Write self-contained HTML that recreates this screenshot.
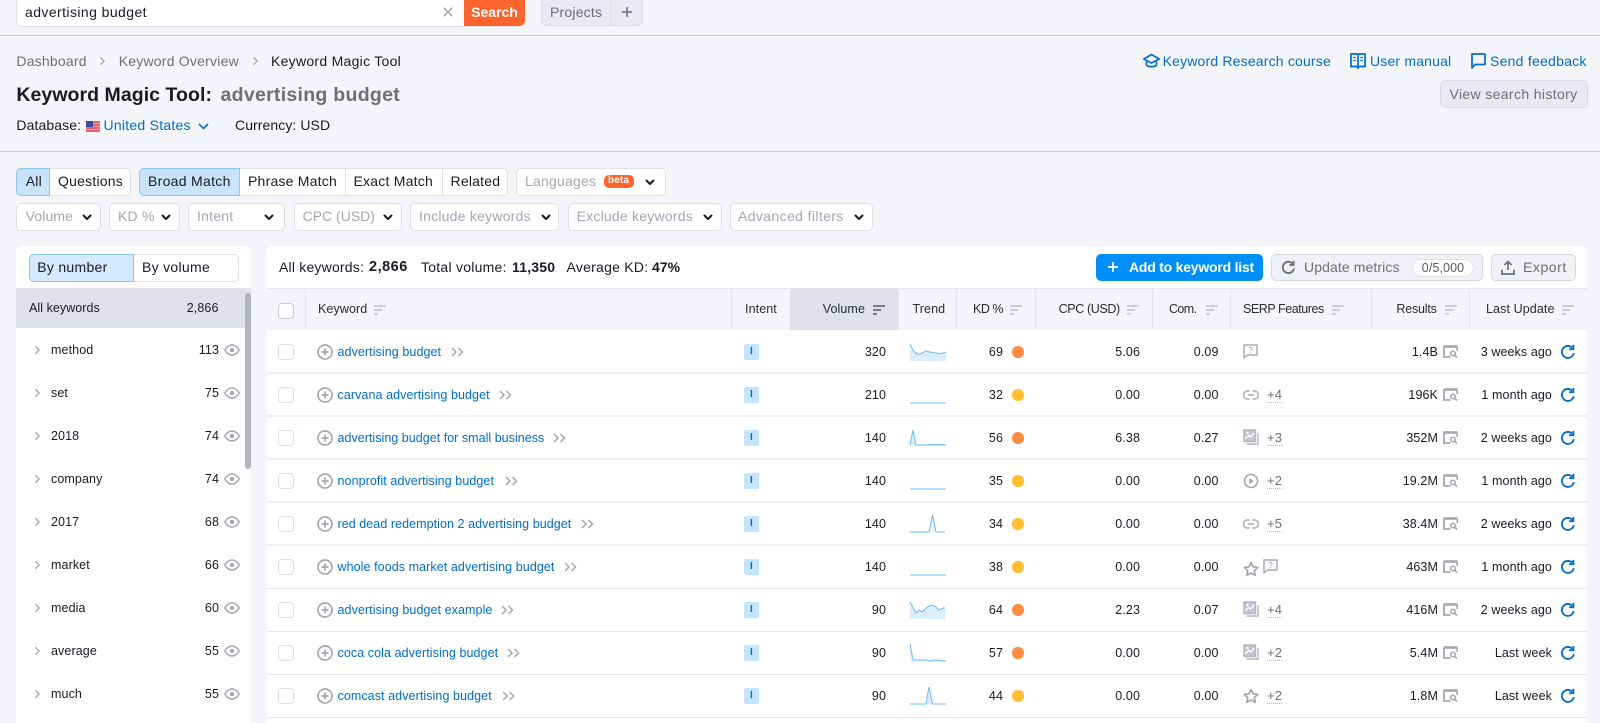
<!DOCTYPE html>
<html lang="en"><head><meta charset="utf-8"><title>Keyword Magic Tool</title>
<style>
html,body{margin:0;padding:0;width:1600px;height:723px;overflow:hidden;background:#f4f5f9}
body{position:relative;font-family:"Liberation Sans",sans-serif;color:#191b23;font-size:12.5px;letter-spacing:.1px}
.a,.a>*,.r>*{position:absolute}
.a{white-space:nowrap}
.b{position:absolute;box-sizing:border-box;background:#fff;border:1px solid #dfe0e6;border-radius:5px}
.t{position:absolute;white-space:nowrap}
.f{font-size:14px;letter-spacing:.22px;line-height:26px;top:0}
svg{position:absolute;overflow:visible}
.blue{color:#006dca}
.g{color:#a4a6b3}
.r{position:absolute;left:0;width:1600px;height:43px;line-height:45px;white-space:nowrap}
.r .c{left:278px;top:14px;width:16px;height:16px;box-sizing:border-box;border:1px solid #dcdee4;border-radius:4px;background:#fff}
.r .k{left:337.5px;color:#006dca;letter-spacing:.08px}
.r .i{left:744px;top:14px;width:15px;height:16px;background:#c4e5fe;border-radius:2px;color:#006dca;font-size:10px;font-weight:bold;text-align:center;line-height:16px}
.r .v{right:714px}.r .d{right:597px}.r .p{right:460px}.r .m{right:381.5px}.r .s{right:162px}.r .u{right:48px}
.r .o{left:1012px;top:16px;width:11.5px;height:11.5px;border-radius:50%}
.or{background:#ff8c43}.ye{background:#ffbf31}
.r .n{left:1267px;color:#6c6e79;font-size:13px;line-height:15px;top:14px;border-bottom:1px dotted #b3b5c0;height:15px}
.l{position:absolute;left:16px;width:235px;height:43px;line-height:43px}
.l span{position:absolute}
.l .x{left:35px;color:#191b23}
.l .y{right:32px}
.h{position:absolute;top:289px;height:41px;line-height:41px;white-space:nowrap;color:#292c36}
.sep{position:absolute;top:289px;width:1px;height:41px;background:#e4e5ea}
</style></head>
<body>
<svg width="0" height="0" style="position:absolute">
<defs>
<symbol id="ch" viewBox="0 0 12 12"><path d="M2.500 4.500L6 8l3.500-3.500" fill="none" stroke="#191b23" stroke-width="2" stroke-linecap="round" stroke-linejoin="round"/></symbol>
<symbol id="sort" viewBox="0 0 12 10"><path d="M0 1h12M0 5h8M0 9h4" fill="none" stroke="#c4c7cf" stroke-width="1.700"/></symbol>
<symbol id="plus" viewBox="0 0 16 16"><circle cx="8" cy="8" r="7" fill="none" stroke="#a4a6b3" stroke-width="1.700"/><path d="M8 4.500v7M4.500 8h7" stroke="#a4a6b3" stroke-width="1.700"/></symbol>
<symbol id="dbl" viewBox="0 0 13 10"><path d="M1 1l4 4-4 4M7.500 1l4 4-4 4" fill="none" stroke="#a4a6b3" stroke-width="1.500"/></symbol>
<symbol id="eye" viewBox="0 0 16 12"><path d="M.8 6c2-3.300 4.700-5 7.200-5s5.200 1.700 7.200 5c-2 3.300-4.700 5-7.200 5S2.800 9.300.8 6z" fill="none" stroke="#a4a6b3" stroke-width="1.500"/><circle cx="8" cy="6" r="2.200" fill="#a4a6b3"/></symbol>
<symbol id="gt" viewBox="0 0 8 12"><path d="M1.500 1.500L6 6l-4.500 4.500" fill="none" stroke="#a4a6b3" stroke-width="1.500"/></symbol>
<symbol id="ref" viewBox="0 0 16 16"><path d="M13.800 9.200A6 6 0 1 1 12.200 3.700" fill="none" stroke="#006dca" stroke-width="1.800"/><path d="M13.400.9v4.300H9.100" fill="none" stroke="#006dca" stroke-width="1.800"/></symbol>
<symbol id="res" viewBox="0 0 15 13"><path d="M.5 1.500h14" stroke="#a4a6b3" stroke-width="2.600"/><path d="M1 2v10h6.500M14.300 2v4" fill="none" stroke="#a4a6b3" stroke-width="1.800"/><circle cx="10" cy="8.500" r="2.300" fill="none" stroke="#a4a6b3" stroke-width="1.500"/><path d="M11.700 10.300l2.300 2.200" stroke="#a4a6b3" stroke-width="1.700"/></symbol>
<symbol id="link" viewBox="0 0 16 12"><path d="M6.500 2H4.500a4 4 0 0 0 0 8h2M9.500 2h2a4 4 0 0 1 0 8h-2M5 6h6" fill="none" stroke="#b3b5c0" stroke-width="1.700"/></symbol>
<symbol id="img" viewBox="0 0 16 16"><path d="M1 1h11.500v11.500H1z" fill="#c4c7cf" stroke="#b3b5c0" stroke-width="1.400"/><path d="M2 10l3.500-3.500 2 1.500 4-4" fill="none" stroke="#fff" stroke-width="1.300"/><circle cx="4.500" cy="4" r="1.200" fill="#fff"/><path d="M15 4v11H3.500" fill="none" stroke="#b3b5c0" stroke-width="1.400"/></symbol>
<symbol id="play" viewBox="0 0 16 16"><circle cx="8" cy="8" r="6.500" fill="none" stroke="#a4a6b3" stroke-width="1.600"/><path d="M6.300 5v6l4.700-3z" fill="#a4a6b3"/></symbol>
<symbol id="star" viewBox="0 0 16 16"><path d="M8 1.500l2 4.300 4.700.6-3.400 3.200.9 4.700L8 12l-4.200 2.300.9-4.700L1.300 6.400 6 5.800z" fill="none" stroke="#a4a6b3" stroke-width="1.700" stroke-linejoin="round"/></symbol>
<symbol id="q" viewBox="0 0 15 15"><path d="M1 1h13v10H4.500L1 14z" fill="none" stroke="#b3b5c0" stroke-width="1.700" stroke-linejoin="round"/><path d="M6 4.200c.4-1 3.200-1 3.200.6 0 1-1.300 1-1.500 2M7.700 8v1" fill="none" stroke="#a4a6b3" stroke-width=".9"/></symbol>
</defs></svg>

<!-- top bar -->
<div style="position:absolute;left:0;top:35px;width:1600px;height:1px;background:#c9cbd3"></div>
<div class="b" style="left:16px;top:-6px;width:509px;height:33px;border-color:#e0e1e7;border-radius:6px"></div>
<div class="t" style="left:25px;top:3px;font-size:14px;letter-spacing:.42px;line-height:18px">advertising budget</div>
<svg style="left:443px;top:7px" width="10" height="10" viewBox="0 0 10 10"><path d="M.8.800l8.400 8.400M9.200.800L.8 9.200" stroke="#a4a6b3" stroke-width="1.500"/></svg>
<div class="t" style="left:464px;top:-6px;width:61px;height:32px;background:#ff642d;border-radius:0 6px 6px 0;color:#fff;font-weight:bold;font-size:14px;line-height:36px;text-align:center;letter-spacing:0">Search</div>
<div class="t" style="left:541px;top:-6px;width:102px;height:32px;box-sizing:border-box;background:#e9eaf0;border:1px solid #dcdee4;border-radius:6px"></div>
<div style="position:absolute;left:611px;top:0;width:1px;height:26px;background:#dcdee4"></div>
<div class="t" style="left:550px;top:3px;font-size:14px;color:#6c6e79;line-height:18px;letter-spacing:.2px">Projects</div>
<svg style="left:622px;top:7px" width="10" height="10" viewBox="0 0 10 10"><path d="M5 0v10M0 5h10" stroke="#6c6e79" stroke-width="1.500"/></svg>

<!-- breadcrumb -->
<div class="t" style="left:16.400px;top:52px;font-size:14px;line-height:18px;color:#6c6e79;letter-spacing:.2px">Dashboard</div>
<svg style="left:99px;top:56px" width="7" height="10"><use href="#gt" width="7" height="10"/></svg>
<div class="t" style="left:118.700px;top:52px;font-size:14px;line-height:18px;color:#6c6e79;letter-spacing:.22px">Keyword Overview</div>
<svg style="left:252px;top:56px" width="7" height="10"><use href="#gt" width="7" height="10"/></svg>
<div class="t" style="left:271px;top:52px;font-size:14px;line-height:18px;letter-spacing:.28px">Keyword Magic Tool</div>
<div class="t" style="left:16.400px;top:83px;font-size:19.500px;line-height:24px;font-weight:bold;letter-spacing:.05px">Keyword Magic Tool:</div>
<div class="t" style="left:220.500px;top:83px;font-size:19.500px;line-height:24px;font-weight:bold;color:#6c6e79;letter-spacing:.28px">advertising budget</div>
<div class="t" style="left:16.400px;top:116px;font-size:14px;line-height:18px;letter-spacing:.1px">Database:</div>
<svg style="left:85.500px;top:121px" width="14" height="11" viewBox="0 0 14 11"><rect width="14" height="11" fill="#f2a3a8"/><path d="M0 1h14M0 4h14M0 7h14M0 10h14" stroke="#e0394a" stroke-width="1.200"/><rect width="7" height="6" fill="#3c4a9a"/></svg>
<div class="t blue" style="left:103.500px;top:116px;font-size:14px;line-height:18px;letter-spacing:.25px">United States</div>
<svg style="left:197.500px;top:122px" width="11" height="9" viewBox="0 0 11 9"><path d="M1 2l4.500 4.500L10 2" fill="none" stroke="#006dca" stroke-width="1.600"/></svg>
<div class="t" style="left:235px;top:116px;font-size:14px;line-height:18px;letter-spacing:.08px">Currency: USD</div>

<!-- top right links -->
<svg style="left:1143px;top:53px" width="17" height="16" viewBox="0 0 17 16"><path d="M.8 6L8.500 1.500 16.200 6 8.500 10z" fill="none" stroke="#006dca" stroke-width="1.700" stroke-linejoin="round"/><path d="M3.500 8.500v3.500c1.500 2.300 8.500 2.300 10 0V8.500" fill="none" stroke="#006dca" stroke-width="1.700"/></svg>
<div class="t blue" style="left:1162.600px;top:52px;font-size:14px;line-height:18px;letter-spacing:.18px">Keyword Research course</div>
<svg style="left:1350px;top:53px" width="16" height="16" viewBox="0 0 16 16"><path d="M1 1h14v12.500H9L8 15l-1-1.500H1zM8 1v12" fill="none" stroke="#006dca" stroke-width="1.700"/><path d="M3.200 4.500h2.500M3.200 7.500h2.500M10.300 4.500h2.500M10.300 7.500h2.500" stroke="#006dca" stroke-width="1.300"/></svg>
<div class="t blue" style="left:1370px;top:52px;font-size:14px;line-height:18px;letter-spacing:.18px">User manual</div>
<svg style="left:1471px;top:53px" width="15" height="16" viewBox="0 0 15 16"><path d="M1 1h13v10.500H4L1 15z" fill="none" stroke="#006dca" stroke-width="1.700" stroke-linejoin="round"/></svg>
<div class="t blue" style="left:1490px;top:52px;font-size:14px;line-height:18px;letter-spacing:.25px">Send feedback</div>
<div class="b" style="left:1440px;top:80px;width:147.500px;height:28px;background:#e9eaf0;border-color:#d9dbe2;color:#6c6e79;font-size:14px;line-height:26px;padding-left:8.500px;letter-spacing:.36px;white-space:nowrap">View search history</div>
<div style="position:absolute;left:0;top:151px;width:1600px;height:1px;background:#c9cbd3"></div>

<!-- filter row 1 -->
<div class="b" style="left:16.400px;top:168px;width:115px;height:28px"></div>
<div class="b" style="left:16.400px;top:168px;width:34px;height:28px;background:#c9e3fb;border-color:#8ec5f5;border-radius:5px 0 0 5px"></div>
<div class="t f" style="left:25.700px;top:168px;font-size:14px">All</div>
<div class="t f" style="left:58px;top:168px">Questions</div>
<div class="b" style="left:139px;top:168px;width:369px;height:28px"></div>
<div class="b" style="left:139px;top:168px;width:100.500px;height:28px;background:#c9e3fb;border-color:#8ec5f5;border-radius:5px 0 0 5px"></div>
<div style="position:absolute;left:345px;top:168px;width:1px;height:28px;background:#dfe0e6"></div>
<div style="position:absolute;left:441.500px;top:168px;width:1px;height:28px;background:#dfe0e6"></div>
<div class="t f" style="left:148px;top:168px;letter-spacing:.3px">Broad Match</div>
<div class="t f" style="left:248px;top:168px">Phrase Match</div>
<div class="t f" style="left:353.500px;top:168px">Exact Match</div>
<div class="t f" style="left:450.500px;top:168px">Related</div>
<div class="b" style="left:516px;top:168px;width:150px;height:28px"></div>
<div class="t f g" style="left:525px;top:168px">Languages</div>
<div class="t" style="left:603.500px;top:175px;width:30px;height:12.500px;background:#ff642d;border-radius:5px;color:#fff;font-size:10px;font-weight:bold;line-height:12px;text-align:center">beta</div>
<svg style="left:644px;top:176px" width="12" height="12"><use href="#ch" width="12" height="12"/></svg>

<!-- filter row 2 -->
<div class="b" style="left:16.400px;top:203px;width:85px;height:28px"></div>
<div class="t f g" style="left:25.700px;top:203px;letter-spacing:.1px">Volume</div>
<svg style="left:81px;top:211px" width="12" height="12"><use href="#ch" width="12" height="12"/></svg>
<div class="b" style="left:109px;top:203px;width:71px;height:28px"></div>
<div class="t f g" style="left:118px;top:203px">KD %</div>
<svg style="left:160px;top:211px" width="12" height="12"><use href="#ch" width="12" height="12"/></svg>
<div class="b" style="left:188px;top:203px;width:97px;height:28px"></div>
<div class="t f g" style="left:197px;top:203px">Intent</div>
<svg style="left:263px;top:211px" width="12" height="12"><use href="#ch" width="12" height="12"/></svg>
<div class="b" style="left:294px;top:203px;width:108px;height:28px"></div>
<div class="t f g" style="left:302.600px;top:203px;letter-spacing:0">CPC (USD)</div>
<svg style="left:382px;top:211px" width="12" height="12"><use href="#ch" width="12" height="12"/></svg>
<div class="b" style="left:410px;top:203px;width:149px;height:28px"></div>
<div class="t f g" style="left:419px;top:203px">Include keywords</div>
<svg style="left:539.500px;top:211px" width="12" height="12"><use href="#ch" width="12" height="12"/></svg>
<div class="b" style="left:568px;top:203px;width:153.500px;height:28px"></div>
<div class="t f g" style="left:576.600px;top:203px">Exclude keywords</div>
<svg style="left:702px;top:211px" width="12" height="12"><use href="#ch" width="12" height="12"/></svg>
<div class="b" style="left:730px;top:203px;width:142.500px;height:28px"></div>
<div class="t f g" style="left:738px;top:203px;letter-spacing:.38px">Advanced filters</div>
<svg style="left:853px;top:211px" width="12" height="12"><use href="#ch" width="12" height="12"/></svg>

<!-- left panel -->
<div style="position:absolute;left:16px;top:246px;width:235px;height:490px;background:#fff;border-radius:6px 6px 0 0"></div>
<div class="b" style="left:28.600px;top:254px;width:210px;height:28px"></div>
<div class="b" style="left:28.600px;top:254px;width:105.500px;height:28px;background:#d5eafd;border-color:#8ec5f5;border-radius:5px 0 0 5px"></div>
<div class="t f" style="left:37.200px;top:254px;letter-spacing:.3px">By number</div>
<div class="t f" style="left:142px;top:254px;letter-spacing:.3px">By volume</div>
<div style="position:absolute;left:16px;top:288px;width:235px;height:40px;background:#e0e1e9"></div>
<div class="t" style="left:29px;top:288px;line-height:40px;font-size:12.500px;letter-spacing:.05px">All keywords</div>
<div class="t" style="right:1381.500px;top:288px;line-height:40px">2,866</div>
<div style="position:absolute;left:245px;top:293px;width:5.500px;height:176px;background:#b3b5bd;border-radius:3px"></div>

<div class="l" style="top:328.500px"><span class="x" style="left:35px">method</span><span class="y">113</span></div>
<div class="l" style="top:371.500px"><span class="x">set</span><span class="y">75</span></div>
<div class="l" style="top:414.500px"><span class="x">2018</span><span class="y">74</span></div>
<div class="l" style="top:457.500px"><span class="x">company</span><span class="y">74</span></div>
<div class="l" style="top:500.500px"><span class="x">2017</span><span class="y">68</span></div>
<div class="l" style="top:543.500px"><span class="x">market</span><span class="y">66</span></div>
<div class="l" style="top:586.500px"><span class="x">media</span><span class="y">60</span></div>
<div class="l" style="top:629.500px"><span class="x">average</span><span class="y">55</span></div>
<div class="l" style="top:672.500px"><span class="x">much</span><span class="y">55</span></div>

<svg style="left:34px;top:345px" width="7" height="10"><use href="#gt" width="7" height="10"/></svg><svg style="left:223.500px;top:344px" width="16" height="12"><use href="#eye" width="16" height="12"/></svg>
<svg style="left:34px;top:388px" width="7" height="10"><use href="#gt" width="7" height="10"/></svg><svg style="left:223.500px;top:387px" width="16" height="12"><use href="#eye" width="16" height="12"/></svg>
<svg style="left:34px;top:431px" width="7" height="10"><use href="#gt" width="7" height="10"/></svg><svg style="left:223.500px;top:430px" width="16" height="12"><use href="#eye" width="16" height="12"/></svg>
<svg style="left:34px;top:474px" width="7" height="10"><use href="#gt" width="7" height="10"/></svg><svg style="left:223.500px;top:473px" width="16" height="12"><use href="#eye" width="16" height="12"/></svg>
<svg style="left:34px;top:517px" width="7" height="10"><use href="#gt" width="7" height="10"/></svg><svg style="left:223.500px;top:516px" width="16" height="12"><use href="#eye" width="16" height="12"/></svg>
<svg style="left:34px;top:560px" width="7" height="10"><use href="#gt" width="7" height="10"/></svg><svg style="left:223.500px;top:559px" width="16" height="12"><use href="#eye" width="16" height="12"/></svg>
<svg style="left:34px;top:603px" width="7" height="10"><use href="#gt" width="7" height="10"/></svg><svg style="left:223.500px;top:602px" width="16" height="12"><use href="#eye" width="16" height="12"/></svg>
<svg style="left:34px;top:646px" width="7" height="10"><use href="#gt" width="7" height="10"/></svg><svg style="left:223.500px;top:645px" width="16" height="12"><use href="#eye" width="16" height="12"/></svg>
<svg style="left:34px;top:689px" width="7" height="10"><use href="#gt" width="7" height="10"/></svg><svg style="left:223.500px;top:688px" width="16" height="12"><use href="#eye" width="16" height="12"/></svg>

<!-- right panel -->
<div style="position:absolute;left:267px;top:246px;width:1320px;height:490px;background:#fff;border-radius:6px 6px 0 0"></div>
<div class="t" style="left:279px;top:258px;font-size:14px;line-height:18px;letter-spacing:.2px">All keywords:</div>
<div class="t" style="left:369px;top:258px;font-size:14.500px;line-height:18px;font-weight:bold;letter-spacing:.5px">2,866</div>
<div class="t" style="left:421px;top:258px;font-size:14px;line-height:18px;letter-spacing:.25px">Total volume:</div>
<div class="t" style="left:512px;top:258px;font-size:14px;line-height:18px;font-weight:bold;letter-spacing:.2px">11,350</div>
<div class="t" style="left:566.500px;top:258px;font-size:14px;line-height:18px;letter-spacing:.25px">Average KD:</div>
<div class="t" style="left:652px;top:258px;font-size:14px;line-height:18px;font-weight:bold;letter-spacing:0">47%</div>
<div class="t" style="left:1096px;top:254px;width:167px;height:27px;background:#008ff8;border-radius:5px"></div>
<svg style="left:1108px;top:262px" width="10" height="10" viewBox="0 0 10 10"><path d="M5 0v10M0 5h10" stroke="#fff" stroke-width="1.700"/></svg>
<div class="t" style="left:1129px;top:258px;color:#fff;font-size:14px;line-height:18px;font-weight:bold;letter-spacing:-.22px">Add to keyword list</div>
<div class="b" style="left:1271px;top:254px;width:212px;height:27px;background:#f0f1f5;border-color:#d5d7de"></div>
<svg style="left:1281px;top:260px" width="15" height="15" viewBox="0 0 16 16"><path d="M13.800 9.200A6 6 0 1 1 12.200 3.700" fill="none" stroke="#6c6e79" stroke-width="2"/><path d="M13.400.9v4.300H9.100" fill="none" stroke="#6c6e79" stroke-width="2"/></svg>
<div class="t" style="left:1304px;top:258px;color:#6c6e79;font-size:14px;line-height:18px;letter-spacing:.1px">Update metrics</div>
<div class="b" style="left:1412px;top:259px;width:62px;height:18px;border-radius:9px;text-align:center;line-height:16px;color:#5a5c67;font-size:12.500px;border-color:#dfe0e6">0/5,000</div>
<div class="b" style="left:1491px;top:254px;width:84.500px;height:27px;background:#f0f1f5;border-color:#d5d7de"></div>
<svg style="left:1501px;top:260px" width="14" height="15" viewBox="0 0 14 15"><path d="M7 10V2M3.500 5L7 1.500 10.500 5" fill="none" stroke="#6c6e79" stroke-width="1.600"/><path d="M1 10v4h12v-4" fill="none" stroke="#6c6e79" stroke-width="1.800"/></svg>
<div class="t" style="left:1523px;top:258px;color:#6c6e79;font-size:14px;line-height:18px;letter-spacing:.55px">Export</div>

<!-- table header -->
<div style="position:absolute;left:267px;top:288px;width:1320px;height:42px;background:#f4f5f9;border-top:1px solid #e4e5ea;box-sizing:border-box"></div>
<div style="position:absolute;left:790px;top:289px;width:108px;height:41px;background:#e0e1e9"></div>
<div class="sep" style="left:305px"></div><div class="sep" style="left:731px"></div><div class="sep" style="left:898px"></div><div class="sep" style="left:956px"></div><div class="sep" style="left:1035px"></div><div class="sep" style="left:1152px"></div><div class="sep" style="left:1230px"></div><div class="sep" style="left:1371px"></div><div class="sep" style="left:1469px"></div>
<div style="position:absolute;left:278px;top:303px;width:16px;height:16px;box-sizing:border-box;border:1px solid #c9cbd3;border-radius:4px;background:#fff"></div>
<div class="h" style="left:318px">Keyword</div><svg style="left:374px;top:305px" width="12" height="10"><use href="#sort" width="12" height="10"/></svg>
<div class="h" style="left:745px">Intent</div>
<div class="h" style="right:735px">Volume</div><svg style="left:873px;top:305px" width="12" height="10" viewBox="0 0 12 10"><path d="M0 1h12M0 5h8M0 9h4" fill="none" stroke="#6c6e79" stroke-width="1.700"/></svg>
<div class="h" style="left:912.500px">Trend</div>
<div class="h" style="left:973px;letter-spacing:-.5px">KD %</div><svg style="left:1010px;top:305px" width="12" height="10"><use href="#sort" width="12" height="10"/></svg>
<div class="h" style="left:1058.600px;letter-spacing:-.38px">CPC (USD)</div><svg style="left:1127px;top:305px" width="12" height="10"><use href="#sort" width="12" height="10"/></svg>
<div class="h" style="left:1169px;letter-spacing:-.6px">Com.</div><svg style="left:1206px;top:305px" width="12" height="10"><use href="#sort" width="12" height="10"/></svg>
<div class="h" style="left:1243px;letter-spacing:-.45px">SERP Features</div><svg style="left:1332px;top:305px" width="12" height="10"><use href="#sort" width="12" height="10"/></svg>
<div class="h" style="left:1396.400px;letter-spacing:-.2px">Results</div><svg style="left:1445px;top:305px" width="12" height="10"><use href="#sort" width="12" height="10"/></svg>
<div class="h" style="left:1486px">Last Update</div><svg style="left:1562px;top:305px" width="12" height="10"><use href="#sort" width="12" height="10"/></svg>

<!-- row lines -->
<div style="position:absolute;left:267px;top:372px;width:1320px;height:2px;background:#eeeff4"></div>
<div style="position:absolute;left:267px;top:415px;width:1320px;height:2px;background:#eeeff4"></div>
<div style="position:absolute;left:267px;top:458px;width:1320px;height:2px;background:#eeeff4"></div>
<div style="position:absolute;left:267px;top:501px;width:1320px;height:2px;background:#eeeff4"></div>
<div style="position:absolute;left:267px;top:544px;width:1320px;height:2px;background:#eeeff4"></div>
<div style="position:absolute;left:267px;top:588px;width:1320px;height:1px;background:#e6e7ed"></div>
<div style="position:absolute;left:267px;top:631px;width:1320px;height:1px;background:#e6e7ed"></div>
<div style="position:absolute;left:267px;top:674px;width:1320px;height:1px;background:#e6e7ed"></div>
<div style="position:absolute;left:267px;top:717px;width:1320px;height:1px;background:#e6e7ed"></div>

<!-- rows -->
<div class="r" style="top:330px"><div class="c"></div><svg style="left:317px;top:14px" width="16" height="16"><use href="#plus" width="16" height="16"/></svg><span class="k">advertising budget</span><svg style="left:451px;top:17px" width="13" height="10"><use href="#dbl" width="13" height="10"/></svg><div class="i">I</div><span class="v">320</span>
<svg style="left:910px;top:13px" width="36" height="18" viewBox="0 0 36 18"><path d="M0 1l3 6 4 4h3l6-3 4 1 6 1 4 1 6-2v9H0z" fill="#dceefd"/><path d="M0 1l3 6 4 4h3l6-3 4 1 6 1 4 1 6-2" fill="none" stroke="#6bbcf7" stroke-width="1"/></svg>
<span class="d">69</span><div class="o or"></div><span class="p">5.06</span><span class="m">0.09</span>
<svg style="left:1243px;top:14px" width="15" height="15"><use href="#q" width="15" height="15"/></svg>
<span class="s">1.4B</span><svg style="left:1443px;top:15px" width="15" height="13"><use href="#res" width="15" height="13"/></svg><span class="u">3 weeks ago</span><svg style="left:1560px;top:14px" width="16" height="16"><use href="#ref" width="16" height="16"/></svg></div>

<div class="r" style="top:373px"><div class="c"></div><svg style="left:317px;top:14px" width="16" height="16"><use href="#plus" width="16" height="16"/></svg><span class="k">carvana advertising budget</span><svg style="left:498.500px;top:17px" width="13" height="10"><use href="#dbl" width="13" height="10"/></svg><div class="i">I</div><span class="v">210</span>
<svg style="left:910px;top:13px" width="36" height="18" viewBox="0 0 36 18"><path d="M0 17h36" fill="none" stroke="#6bbcf7" stroke-width="1"/></svg>
<span class="d">32</span><div class="o ye"></div><span class="p">0.00</span><span class="m">0.00</span>
<svg style="left:1243px;top:16px" width="16" height="12"><use href="#link" width="16" height="12"/></svg><span class="n">+4</span>
<span class="s">196K</span><svg style="left:1443px;top:15px" width="15" height="13"><use href="#res" width="15" height="13"/></svg><span class="u">1 month ago</span><svg style="left:1560px;top:14px" width="16" height="16"><use href="#ref" width="16" height="16"/></svg></div>

<div class="r" style="top:416px"><div class="c"></div><svg style="left:317px;top:14px" width="16" height="16"><use href="#plus" width="16" height="16"/></svg><span class="k" style="letter-spacing:.03px">advertising budget for small business</span><svg style="left:553px;top:17px" width="13" height="10"><use href="#dbl" width="13" height="10"/></svg><div class="i">I</div><span class="v">140</span>
<svg style="left:910px;top:13px" width="36" height="18" viewBox="0 0 36 18"><path d="M0 16l3-15 3 15 8 0 8-.5 8 0 6 .5v1H0z" fill="#dceefd"/><path d="M0 16l3-15 3 15h8l8-.5 8 0 6 .5" fill="none" stroke="#6bbcf7" stroke-width="1"/></svg>
<span class="d">56</span><div class="o or"></div><span class="p">6.38</span><span class="m">0.27</span>
<svg style="left:1243px;top:13px" width="16" height="16"><use href="#img" width="16" height="16"/></svg><span class="n">+3</span>
<span class="s">352M</span><svg style="left:1443px;top:15px" width="15" height="13"><use href="#res" width="15" height="13"/></svg><span class="u">2 weeks ago</span><svg style="left:1560px;top:14px" width="16" height="16"><use href="#ref" width="16" height="16"/></svg></div>

<div class="r" style="top:459px"><div class="c"></div><svg style="left:317px;top:14px" width="16" height="16"><use href="#plus" width="16" height="16"/></svg><span class="k">nonprofit advertising budget</span><svg style="left:505px;top:17px" width="13" height="10"><use href="#dbl" width="13" height="10"/></svg><div class="i">I</div><span class="v">140</span>
<svg style="left:910px;top:13px" width="36" height="18" viewBox="0 0 36 18"><path d="M0 17h36" fill="none" stroke="#6bbcf7" stroke-width="1"/></svg>
<span class="d">35</span><div class="o ye"></div><span class="p">0.00</span><span class="m">0.00</span>
<svg style="left:1243px;top:14px" width="16" height="16"><use href="#play" width="16" height="16"/></svg><span class="n">+2</span>
<span class="s">19.2M</span><svg style="left:1443px;top:15px" width="15" height="13"><use href="#res" width="15" height="13"/></svg><span class="u">1 month ago</span><svg style="left:1560px;top:14px" width="16" height="16"><use href="#ref" width="16" height="16"/></svg></div>

<div class="r" style="top:502px"><div class="c"></div><svg style="left:317px;top:14px" width="16" height="16"><use href="#plus" width="16" height="16"/></svg><span class="k" style="letter-spacing:.06px">red dead redemption 2 advertising budget</span><svg style="left:581px;top:17px" width="13" height="10"><use href="#dbl" width="13" height="10"/></svg><div class="i">I</div><span class="v">140</span>
<svg style="left:910px;top:13px" width="36" height="18" viewBox="0 0 36 18"><path d="M0 17h19l3.500-17L26 17h9" fill="#e8f4fe"/><path d="M0 17h19l3.500-17L26 17h9" fill="none" stroke="#6bbcf7" stroke-width="1"/></svg>
<span class="d">34</span><div class="o ye"></div><span class="p">0.00</span><span class="m">0.00</span>
<svg style="left:1243px;top:16px" width="16" height="12"><use href="#link" width="16" height="12"/></svg><span class="n">+5</span>
<span class="s">38.4M</span><svg style="left:1443px;top:15px" width="15" height="13"><use href="#res" width="15" height="13"/></svg><span class="u">2 weeks ago</span><svg style="left:1560px;top:14px" width="16" height="16"><use href="#ref" width="16" height="16"/></svg></div>

<div class="r" style="top:545px"><div class="c"></div><svg style="left:317px;top:14px" width="16" height="16"><use href="#plus" width="16" height="16"/></svg><span class="k">whole foods market advertising budget</span><svg style="left:563.500px;top:17px" width="13" height="10"><use href="#dbl" width="13" height="10"/></svg><div class="i">I</div><span class="v">140</span>
<svg style="left:910px;top:13px" width="36" height="18" viewBox="0 0 36 18"><path d="M0 17h36" fill="none" stroke="#6bbcf7" stroke-width="1"/></svg>
<span class="d">38</span><div class="o ye"></div><span class="p">0.00</span><span class="m">0.00</span>
<svg style="left:1243px;top:15.500px" width="16" height="16"><use href="#star" width="16" height="16"/></svg><svg style="left:1263px;top:14px" width="15" height="15"><use href="#q" width="15" height="15"/></svg>
<span class="s">463M</span><svg style="left:1443px;top:15px" width="15" height="13"><use href="#res" width="15" height="13"/></svg><span class="u">1 month ago</span><svg style="left:1560px;top:14px" width="16" height="16"><use href="#ref" width="16" height="16"/></svg></div>

<div class="r" style="top:588px"><div class="c"></div><svg style="left:317px;top:14px" width="16" height="16"><use href="#plus" width="16" height="16"/></svg><span class="k">advertising budget example</span><svg style="left:500.500px;top:17px" width="13" height="10"><use href="#dbl" width="13" height="10"/></svg><div class="i">I</div><span class="v">90</span>
<svg style="left:910px;top:13px" width="36" height="18" viewBox="0 0 36 18"><path d="M0 1l6 11 3-3 3 2 7-6 3-1 4 2 3 3 4-2h2v11H0z" fill="#dceefd"/><path d="M0 1l6 11 3-3 3 2 7-6 3-1 4 2 3 3 4-2h2" fill="none" stroke="#6bbcf7" stroke-width="1"/></svg>
<span class="d">64</span><div class="o or"></div><span class="p">2.23</span><span class="m">0.07</span>
<svg style="left:1243px;top:13px" width="16" height="16"><use href="#img" width="16" height="16"/></svg><span class="n">+4</span>
<span class="s">416M</span><svg style="left:1443px;top:15px" width="15" height="13"><use href="#res" width="15" height="13"/></svg><span class="u">2 weeks ago</span><svg style="left:1560px;top:14px" width="16" height="16"><use href="#ref" width="16" height="16"/></svg></div>

<div class="r" style="top:631px"><div class="c"></div><svg style="left:317px;top:14px" width="16" height="16"><use href="#plus" width="16" height="16"/></svg><span class="k">coca cola advertising budget</span><svg style="left:507px;top:17px" width="13" height="10"><use href="#dbl" width="13" height="10"/></svg><div class="i">I</div><span class="v">90</span>
<svg style="left:910px;top:13px" width="36" height="18" viewBox="0 0 36 18"><path d="M0 0l3 16h13l4 1 4-1 12 1v1H0z" fill="#e8f4fe"/><path d="M0 0l3 16h13l4 1 4-1 12 1" fill="none" stroke="#6bbcf7" stroke-width="1"/></svg>
<span class="d">57</span><div class="o or"></div><span class="p">0.00</span><span class="m">0.00</span>
<svg style="left:1243px;top:13px" width="16" height="16"><use href="#img" width="16" height="16"/></svg><span class="n">+2</span>
<span class="s">5.4M</span><svg style="left:1443px;top:15px" width="15" height="13"><use href="#res" width="15" height="13"/></svg><span class="u">Last week</span><svg style="left:1560px;top:14px" width="16" height="16"><use href="#ref" width="16" height="16"/></svg></div>

<div class="r" style="top:674px"><div class="c"></div><svg style="left:317px;top:14px" width="16" height="16"><use href="#plus" width="16" height="16"/></svg><span class="k">comcast advertising budget</span><svg style="left:501.500px;top:17px" width="13" height="10"><use href="#dbl" width="13" height="10"/></svg><div class="i">I</div><span class="v">90</span>
<svg style="left:910px;top:13px" width="36" height="18" viewBox="0 0 36 18"><path d="M0 17h16l3-17 3.500 17H36" fill="#dceefd"/><path d="M0 17h16l3-17 3.500 17H36" fill="none" stroke="#6bbcf7" stroke-width="1"/></svg>
<span class="d">44</span><div class="o ye"></div><span class="p">0.00</span><span class="m">0.00</span>
<svg style="left:1243px;top:14px" width="16" height="16"><use href="#star" width="16" height="16"/></svg><span class="n">+2</span>
<span class="s">1.8M</span><svg style="left:1443px;top:15px" width="15" height="13"><use href="#res" width="15" height="13"/></svg><span class="u">Last week</span><svg style="left:1560px;top:14px" width="16" height="16"><use href="#ref" width="16" height="16"/></svg></div>
</body></html>
